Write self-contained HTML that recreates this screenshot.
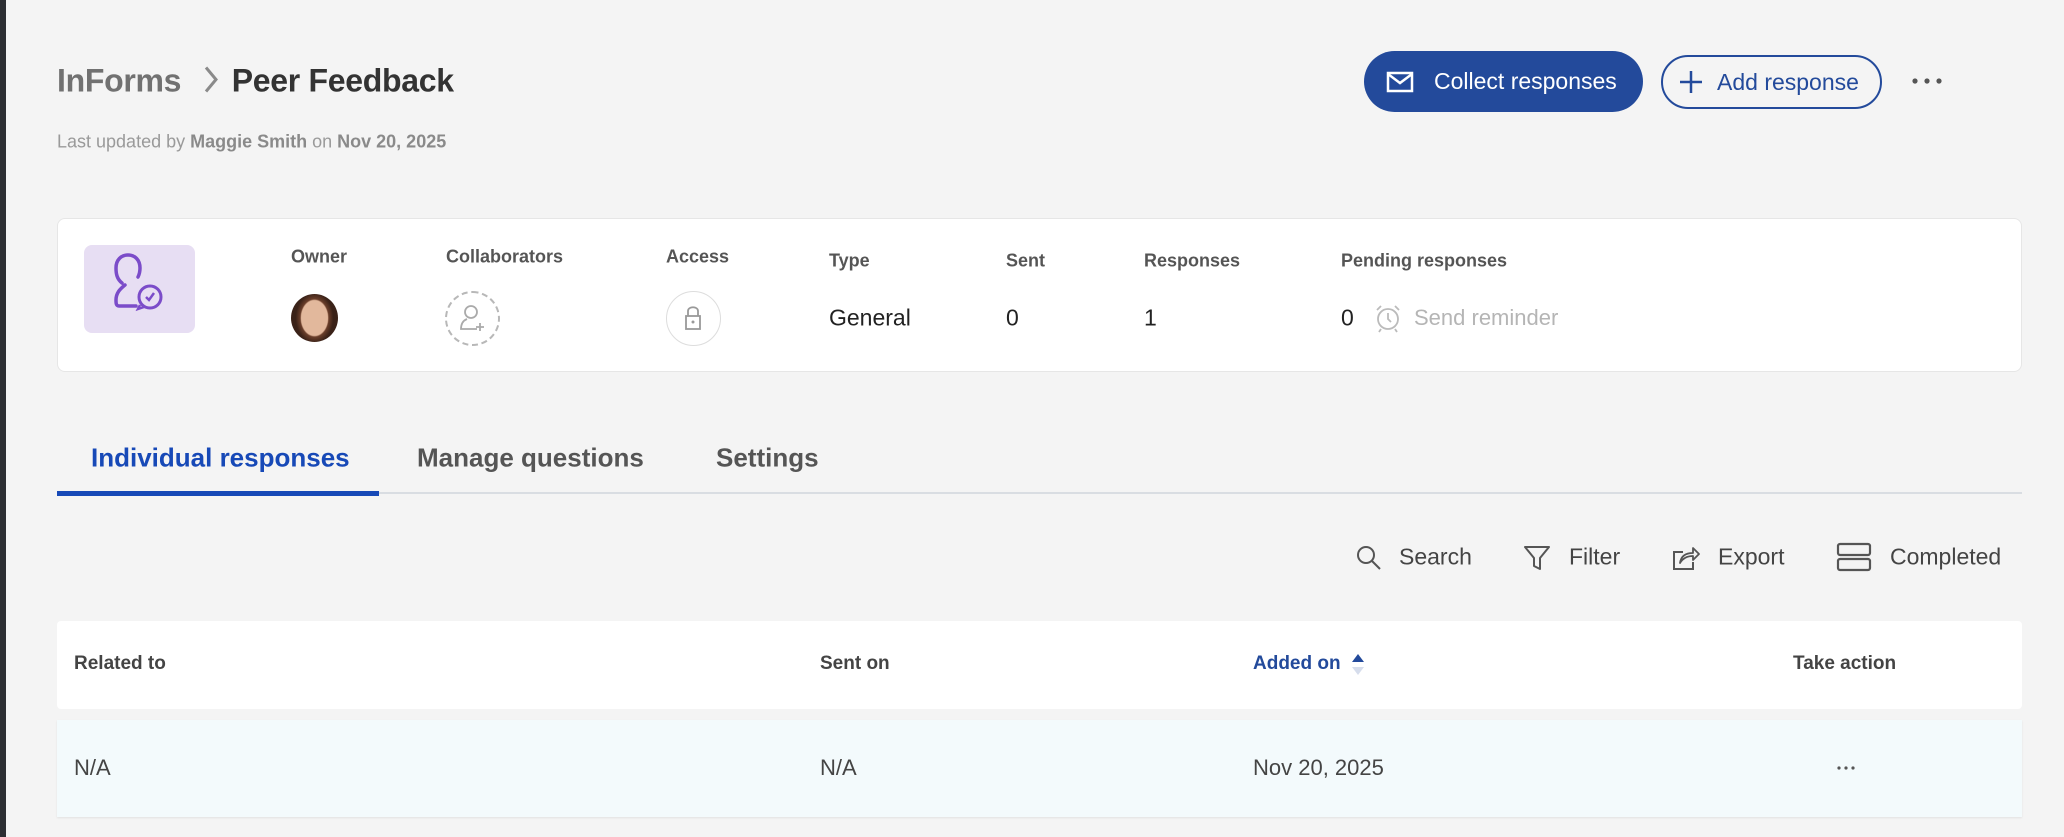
<!DOCTYPE html>
<html><head><meta charset="utf-8"><style>
*{box-sizing:border-box;margin:0;padding:0}
body{width:2064px;height:837px;background:#f4f4f4;font-family:"Liberation Sans",Arial,sans-serif;position:relative;overflow:hidden;color:#333}
.a{position:absolute;white-space:nowrap}
.bar{left:0;top:0;width:6px;height:837px;background:#2c2e33}
.lbl{font-size:18px;font-weight:bold;color:#555;transform:translateY(-50%)}
.val{font-size:23px;color:#222;transform:translateY(-50%)}
.tb{font-size:23px;color:#444;transform:translateY(-50%)}
.th{font-size:19px;font-weight:bold;color:#444;transform:translateY(-50%)}
.td{font-size:22px;color:#444;transform:translateY(-50%)}
</style></head><body>
<div class="a bar"></div>
<div class="a" style="left:57px;top:81px;transform:translateY(-50%);font-size:32px;font-weight:bold;letter-spacing:-0.3px"><span style="color:#717171">InForms</span>
<svg width="22" height="30" viewBox="0 0 22 30" style="vertical-align:-3px;margin:0 10px 0 10px"><path d="M6 3 L16 15 L6 27" fill="none" stroke="#8a8a8a" stroke-width="3"/></svg><span style="color:#333">Peer Feedback</span></div>
<div class="a" style="left:57px;top:142px;transform:translateY(-50%);font-size:18px;color:#9a9a9a">Last updated by <b style="color:#8a8a8a">Maggie Smith</b> on <b style="color:#8a8a8a">Nov 20, 2025</b></div>

<div class="a" style="left:1364px;top:51px;width:279px;height:61px;border-radius:31px;background:#234a9b;color:#fff;font-size:23px;display:flex;align-items:center;padding-left:22px">
<svg width="28" height="22" viewBox="0 0 28 22" style="margin-right:20px"><rect x="2" y="2" width="24" height="18" fill="none" stroke="#fff" stroke-width="2.5"/><path d="M2 3 L14 12 L26 3" fill="none" stroke="#fff" stroke-width="2.5"/></svg>Collect responses</div>
<div class="a" style="left:1661px;top:55px;width:221px;height:54px;border-radius:27px;border:2px solid #234a9b;color:#234a9b;font-size:23px;display:flex;align-items:center;padding-left:16px">
<svg width="24" height="24" viewBox="0 0 24 24" style="margin-right:14px"><path d="M12 1V23M1 12H23" stroke="#234a9b" stroke-width="2.5"/></svg>Add response</div>
<svg class="a" style="left:1910px;top:76px" width="34" height="10" viewBox="0 0 34 10"><circle cx="5" cy="5" r="2.6" fill="#555"/><circle cx="17" cy="5" r="2.6" fill="#555"/><circle cx="29" cy="5" r="2.6" fill="#555"/></svg>

<div class="a" style="left:57px;top:218px;width:1965px;height:154px;background:#fff;border:1px solid #e6e6e6;border-radius:8px"></div>
<div class="a" style="left:84px;top:245px;width:111px;height:88px;background:#e7def3;border-radius:8px">
<svg width="111" height="88" viewBox="0 0 111 88"><path d="M38 38 C33 34 32 29 32 23 C32 15 37 10 44 10 C51 10 56 15 56 23 C56 27 55 30 54 32 M41 40 C36 44 32 48 32 55 C32 58 32 61 35 61 L52 61" fill="none" stroke="#7b4cc9" stroke-width="3.5" stroke-linecap="round"/><circle cx="66" cy="52" r="11" fill="none" stroke="#7b4cc9" stroke-width="3"/><path d="M62 52 L65 55 L70 48" fill="none" stroke="#7b4cc9" stroke-width="2.5"/><path d="M56 60 L54 64 L60 62" fill="none" stroke="#7b4cc9" stroke-width="2.5"/></svg></div>

<div class="a lbl" style="left:291px;top:257px">Owner</div>
<div class="a lbl" style="left:446px;top:257px">Collaborators</div>
<div class="a lbl" style="left:666px;top:257px">Access</div>
<div class="a lbl" style="left:829px;top:261px">Type</div>
<div class="a lbl" style="left:1006px;top:261px">Sent</div>
<div class="a lbl" style="left:1144px;top:261px">Responses</div>
<div class="a lbl" style="left:1341px;top:261px">Pending responses</div>

<div class="a" style="left:291px;top:294px;width:47px;height:48px;border-radius:50%;background:radial-gradient(ellipse 40% 52% at 50% 50%,#e2b89c 0 70%,#6a3e2a 76%,#3a2218 100%)"></div>
<div class="a" style="left:445px;top:291px;width:55px;height:55px;border-radius:50%;border:2px dashed #b8b8b8">
<svg width="51" height="51" viewBox="0 0 51 51"><circle cx="24" cy="19" r="6" fill="none" stroke="#aaa" stroke-width="1.8"/><path d="M20 26 C15 28 14 32 14 36 L30 36" fill="none" stroke="#aaa" stroke-width="1.8"/><path d="M33 30V38M29 34H37" stroke="#aaa" stroke-width="1.8"/></svg></div>
<div class="a" style="left:666px;top:291px;width:55px;height:55px;border-radius:50%;border:1.5px solid #ddd">
<svg width="52" height="52" viewBox="0 0 52 52"><rect x="19" y="24" width="14" height="13" fill="none" stroke="#999" stroke-width="1.8"/><path d="M21 24 V19 C21 14 31 14 31 19 V24" fill="none" stroke="#999" stroke-width="1.8"/><circle cx="26" cy="30" r="1.5" fill="#999"/></svg></div>
<div class="a val" style="left:829px;top:318px">General</div>
<div class="a val" style="left:1006px;top:318px">0</div>
<div class="a val" style="left:1144px;top:318px">1</div>
<div class="a val" style="left:1341px;top:318px">0</div>
<svg class="a" style="left:1372px;top:302px" width="32" height="32" viewBox="0 0 32 32"><circle cx="16" cy="17" r="10" fill="none" stroke="#bbb" stroke-width="1.8"/><path d="M16 11V17L19 20M5 8L9 4M27 8L23 4M9 27L7 30M23 27L25 30" fill="none" stroke="#bbb" stroke-width="1.8"/></svg>
<div class="a val" style="left:1414px;top:318px;color:#b5b5b5;font-size:22px">Send reminder</div>

<div class="a" style="left:91px;top:458px;transform:translateY(-50%);font-size:26px;font-weight:bold;color:#1749b7">Individual responses</div>
<div class="a" style="left:417px;top:458px;transform:translateY(-50%);font-size:26px;font-weight:bold;color:#555">Manage questions</div>
<div class="a" style="left:716px;top:458px;transform:translateY(-50%);font-size:26px;font-weight:bold;color:#555">Settings</div>
<div class="a" style="left:57px;top:492px;width:1965px;height:2px;background:#d9dde2"></div>
<div class="a" style="left:57px;top:491px;width:322px;height:5px;background:#1749b7"></div>

<svg class="a" style="left:1355px;top:544px" width="28" height="28" viewBox="0 0 28 28"><circle cx="11" cy="11" r="8" fill="none" stroke="#555" stroke-width="2"/><path d="M17 17L25 25" stroke="#555" stroke-width="2"/></svg>
<div class="a tb" style="left:1399px;top:557px">Search</div>
<svg class="a" style="left:1523px;top:544px" width="28" height="28" viewBox="0 0 28 28"><path d="M2 3H26L17 14V25L11 22V14Z" fill="none" stroke="#555" stroke-width="2" stroke-linejoin="round"/></svg>
<div class="a tb" style="left:1569px;top:557px">Filter</div>
<svg class="a" style="left:1671px;top:544px" width="30" height="28" viewBox="0 0 30 28"><path d="M12 8H3V25H22V18" fill="none" stroke="#555" stroke-width="2"/><path d="M9 19C10 12 15 9 22 9V4L28 10L22 16V12C16 12 12 14 9 19Z" fill="none" stroke="#555" stroke-width="1.8" stroke-linejoin="round"/></svg>
<div class="a tb" style="left:1718px;top:557px">Export</div>
<svg class="a" style="left:1836px;top:542px" width="36" height="30" viewBox="0 0 36 30"><rect x="2" y="2" width="32" height="11" rx="2" fill="none" stroke="#555" stroke-width="2.2"/><rect x="2" y="17" width="32" height="11" rx="2" fill="none" stroke="#555" stroke-width="2.2"/></svg>
<div class="a tb" style="left:1890px;top:557px">Completed</div>

<div class="a" style="left:57px;top:621px;width:1965px;height:88px;background:#fff;border-radius:4px"></div>
<div class="a th" style="left:74px;top:664px">Related to</div>
<div class="a th" style="left:820px;top:664px">Sent on</div>
<div class="a th" style="left:1253px;top:664px;color:#234a9b">Added on</div>
<svg class="a" style="left:1350px;top:652px" width="16" height="26" viewBox="0 0 16 26"><path d="M2 10L8 2L14 10Z" fill="#234a9b"/><path d="M2 15L8 23L14 15Z" fill="#d6ddec"/></svg>
<div class="a th" style="left:1793px;top:664px">Take action</div>

<div class="a" style="left:57px;top:720px;width:1965px;height:97px;background:#f3fafc;box-shadow:0 1px 2px rgba(0,0,0,0.08)"></div>
<div class="a td" style="left:74px;top:768px">N/A</div>
<div class="a td" style="left:820px;top:768px">N/A</div>
<div class="a td" style="left:1253px;top:768px">Nov 20, 2025</div>
<svg class="a" style="left:1835px;top:764px" width="22" height="8" viewBox="0 0 22 8"><circle cx="4" cy="4" r="1.6" fill="#555"/><circle cx="11" cy="4" r="1.6" fill="#555"/><circle cx="18" cy="4" r="1.6" fill="#555"/></svg>
</body></html>
